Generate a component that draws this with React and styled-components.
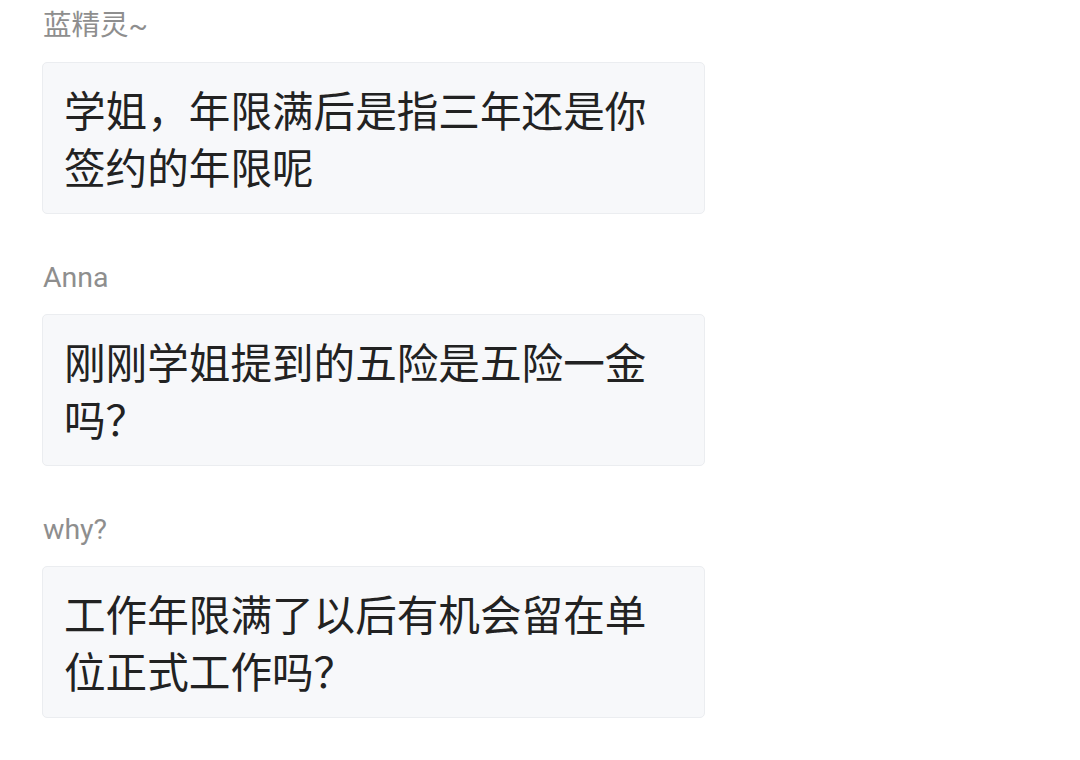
import styled, { createGlobalStyle } from "styled-components";

const GlobalStyle = createGlobalStyle`
  body {
    margin: 0;
    background: #ffffff;
    font-family: Roboto, "Noto Sans CJK SC", sans-serif;
  }
`;

const messages = [
  { name: "蓝精灵~", text: "学姐，年限满后是指三年还是你签约的年限呢" },
  { name: "Anna", text: "刚刚学姐提到的五险是五险一金吗？" },
  { name: "why?", text: "工作年限满了以后有机会留在单位正式工作吗？" },
];

export default function App() {
  return (
    <>
      <GlobalStyle />
      <Page>
        {messages.map((m) => (
          <Comment key={m.name}>
            <Name>{m.name}</Name>
            <Bubble>{m.text}</Bubble>
          </Comment>
        ))}
      </Page>
    </>
  );
}

const Page = styled.div`
  width: 1080px;
  height: 760px;
  overflow: hidden;
  box-sizing: border-box;
  padding: 8px 0 0 42px;
  display: flex;
  flex-direction: column;
  gap: 46px;
`;

const Comment = styled.div`
  display: flex;
  flex-direction: column;
  gap: 18px;
`;

const Name = styled.div`
  font-size: 28.5px;
  line-height: 36px;
  color: #8e8e8e;
  padding-left: 1px;
`;

const Bubble = styled.div`
  width: 663px;
  box-sizing: border-box;
  padding: 18px 40px 18px 21px;
  background: #f7f8fa;
  border: 1px solid #ebedf0;
  border-radius: 5px;
  font-family: "Noto Sans CJK SC", sans-serif;
  font-size: 41.6px;
  line-height: 57px;
  color: #222222;
`;
